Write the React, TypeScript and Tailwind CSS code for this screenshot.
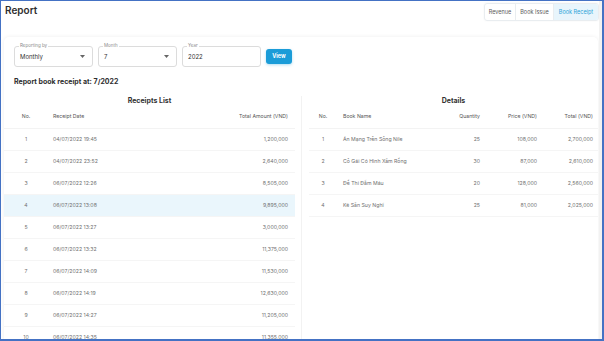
const receipts = [
  ["1", "04/07/2022 19:45", "1,200,000"],
  ["2", "04/07/2022 23:52", "2,640,000"],
  ["3", "06/07/2022 12:26", "8,505,000"],
  ["4", "06/07/2022 13:08", "9,895,000"],
  ["5", "06/07/2022 13:27", "3,000,000"],
  ["6", "06/07/2022 13:32", "11,375,000"],
  ["7", "06/07/2022 14:09", "11,530,000"],
  ["8", "06/07/2022 14:19", "12,630,000"],
  ["9", "06/07/2022 14:27", "11,205,000"],
  ["10", "06/07/2022 14:35", "11,355,000"],
];

const details = [
  ["1", "Án Mạng Trên Sông Nile", "25", "108,000", "2,700,000"],
  ["2", "Cô Gái Có Hình Xăm Rồng", "30", "87,000", "2,610,000"],
  ["3", "Đề Thi Đẫm Máu", "20", "128,000", "2,560,000"],
  ["4", "Kẻ Săn Suy Nghĩ", "25", "81,000", "2,025,000"],
];

function Field({ label, value, select }: { label: string; value: string; select?: boolean }) {
  return (
    <div className="relative flex h-[21px] w-[79px] items-center rounded-[3px] border border-[#dcdcdc] pl-[5px] pr-[5px]">
      <span className="absolute -top-[4px] left-[4px] bg-white px-[1px] text-[4.5px] leading-[6px] text-[#8a8a8a]">
        {label}
      </span>
      <span className="flex-1 text-[6px] text-[#333]">{value}</span>
      {select && (
        <svg width="5" height="3" viewBox="0 0 5 3" className="mr-[2px]">
          <path d="M0 0h5L2.5 3z" fill="#666" />
        </svg>
      )}
    </div>
  );
}

export default function App() {
  return (
    <div className="flex h-[341px] w-[604px] overflow-hidden border-t border-l border-r-2 border-b-2 border-[#4472c4] bg-white font-['Inter',sans-serif]">
      <div className="flex-1">
        <div className="flex items-start justify-between pl-[4px] pt-[2px]">
          <h1 className="mt-[1px] text-[10px] font-semibold leading-[12px] text-[#2e2e2e]">Report</h1>
          <div className="flex h-[18px] overflow-hidden rounded-[3px] border border-[#e9edf0] text-[5.5px] text-[#5a5a5a] shadow-[0_0_2px_rgba(0,0,0,0.05)]">
            <span className="flex w-[31px] items-center justify-center border-r border-[#e9edf0]">Revenue</span>
            <span className="flex w-[38px] items-center justify-center border-r border-[#e9edf0]">Book Issue</span>
            <span className="flex w-[44px] items-center justify-center bg-[#e8f5fc] text-[#2aa3d8]">Book Receipt</span>
          </div>
        </div>

        <div className="ml-[3px] mr-[1px] mt-[16px] h-[320px] rounded-[5px] bg-white shadow-[0_0_4px_rgba(0,0,0,0.07)]">
          <div className="flex items-center gap-[5px] pl-[10px] pt-[9px]">
            <Field label="Reporting by" value="Monthly" select />
            <Field label="Month" value="7" select />
            <Field label="Year" value="2022" />
            <button className="h-[15px] w-[26px] rounded-[3px] bg-[#1b9cd8] text-[5.5px] font-bold text-white shadow-[0_1px_3px_rgba(27,156,216,0.35)]">
              View
            </button>
          </div>
          <p className="mt-[10px] pl-[10px] text-[7px] font-bold leading-[9px] text-[#2e2e2e]">
            Report book receipt at: 7/2022
          </p>

          <div className="mt-[10px] flex">
            <div className="w-[291px]">
              <h2 className="text-center text-[7px] font-bold leading-[9px] text-[#333]">Receipts List</h2>
              <div className="flex h-[24px] items-center border-b border-[#f3f3f3] text-[5.2px] text-[#555]">
                <span className="w-[44px] text-center">No.</span>
                <span className="flex-1 pl-[5px]">Receipt Date</span>
                <span className="pr-[7px] text-right">Total Amount (VND)</span>
              </div>
              {receipts.map(([no, date, amount]) => (
                <div
                  key={no}
                  className={`flex h-[22px] items-center border-b border-[#f5f5f5] text-[5.2px] text-[#707070] ${no === "4" ? "bg-[#eaf6fc]" : ""}`}
                >
                  <span className="w-[44px] text-center">{no}</span>
                  <span className="flex-1 pl-[5px]">{date}</span>
                  <span className="pr-[7px] text-right">{amount}</span>
                </div>
              ))}
            </div>

            <div className="ml-[6px] flex-1 border-l border-[#f2f2f2] pl-[7px]">
              <h2 className="text-center text-[7px] font-bold leading-[9px] text-[#333]">Details</h2>
              <div className="flex h-[24px] items-center border-b border-[#f3f3f3] text-[5.2px] text-[#555]">
                <span className="w-[28px] text-center">No.</span>
                <span className="flex-1 pl-[6px]">Book Name</span>
                <span className="w-[60px] text-right">Quantity</span>
                <span className="w-[57px] text-right">Price (VND)</span>
                <span className="w-[56px] text-right">Total (VND)</span>
                <span className="w-[5px]" />
              </div>
              {details.map(([no, name, qty, price, total]) => (
                <div key={no} className="flex h-[22px] items-center border-b border-[#f5f5f5] text-[5.2px] text-[#707070]">
                  <span className="w-[28px] text-center">{no}</span>
                  <span className="flex-1 pl-[6px]">{name}</span>
                  <span className="w-[60px] text-right">{qty}</span>
                  <span className="w-[57px] text-right">{price}</span>
                  <span className="w-[56px] text-right">{total}</span>
                  <span className="w-[5px]" />
                </div>
              ))}
            </div>
          </div>
        </div>
      </div>
      <div className="w-[3px] bg-[#f2f2f2]" />
    </div>
  );
}
